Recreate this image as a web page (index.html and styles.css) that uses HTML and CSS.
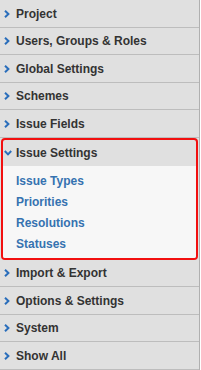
FILE: index.html
```html
<!DOCTYPE html>
<html lang="en">
<head>
    <meta charset="UTF-8">
    <title>Admin Menu</title>
    <link rel="stylesheet" href="styles.css">
</head>
<body>
    <div class="sidebar">
        <ul class="menu">
            <li class="item"><span class="arrow"><svg width="6" height="8" viewBox="0 0 6 8"><path d="M1 0.8 L4.4 4 L1 7.2" fill="none" stroke="#2a6ebb" stroke-width="2"/></svg></span>Project</li>
            <li class="item"><span class="arrow"><svg width="6" height="8" viewBox="0 0 6 8"><path d="M1 0.8 L4.4 4 L1 7.2" fill="none" stroke="#2a6ebb" stroke-width="2"/></svg></span>Users, Groups &amp; Roles</li>
            <li class="item"><span class="arrow"><svg width="6" height="8" viewBox="0 0 6 8"><path d="M1 0.8 L4.4 4 L1 7.2" fill="none" stroke="#2a6ebb" stroke-width="2"/></svg></span>Global Settings</li>
            <li class="item"><span class="arrow"><svg width="6" height="8" viewBox="0 0 6 8"><path d="M1 0.8 L4.4 4 L1 7.2" fill="none" stroke="#2a6ebb" stroke-width="2"/></svg></span>Schemes</li>
            <li class="item"><span class="arrow"><svg width="6" height="8" viewBox="0 0 6 8"><path d="M1 0.8 L4.4 4 L1 7.2" fill="none" stroke="#2a6ebb" stroke-width="2"/></svg></span>Issue Fields</li>
            <li class="open-group">
                <div class="group-head"><span class="arrow"><svg width="8" height="6" viewBox="0 0 8 6"><path d="M0.8 1 L4 4.4 L7.2 1" fill="none" stroke="#2a6ebb" stroke-width="2"/></svg></span>Issue Settings</div>
                <ul class="sub">
                    <li><a href="#">Issue Types</a></li>
                    <li><a href="#">Priorities</a></li>
                    <li><a href="#">Resolutions</a></li>
                    <li><a href="#">Statuses</a></li>
                </ul>
            </li>
            <li class="item"><span class="arrow"><svg width="6" height="8" viewBox="0 0 6 8"><path d="M1 0.8 L4.4 4 L1 7.2" fill="none" stroke="#2a6ebb" stroke-width="2"/></svg></span>Import &amp; Export</li>
            <li class="item"><span class="arrow"><svg width="6" height="8" viewBox="0 0 6 8"><path d="M1 0.8 L4.4 4 L1 7.2" fill="none" stroke="#2a6ebb" stroke-width="2"/></svg></span>Options &amp; Settings</li>
            <li class="item"><span class="arrow"><svg width="6" height="8" viewBox="0 0 6 8"><path d="M1 0.8 L4.4 4 L1 7.2" fill="none" stroke="#2a6ebb" stroke-width="2"/></svg></span>System</li>
            <li class="item"><span class="arrow"><svg width="6" height="8" viewBox="0 0 6 8"><path d="M1 0.8 L4.4 4 L1 7.2" fill="none" stroke="#2a6ebb" stroke-width="2"/></svg></span>Show All</li>
        </ul>
    </div>
</body>
</html>
```

FILE: styles.css
```css
body {
    margin: 0;
    padding: 0;
    background-color: #ffffff;
    font-family: "Liberation Sans", Arial, sans-serif;
    font-size: 12px;
    font-weight: bold;
}
.sidebar {
    width: 199px;
    height: 370px;
    background-color: #e0e0e0;
    border-right: 1px solid #b0b0b0;
}
.menu {
    list-style: none;
    margin: 0;
    padding: 0;
}
.item {
    display: flex;
    align-items: center;
    box-sizing: border-box;
    height: 27.5px;
    padding-top: 1px;
    border-bottom: 1px solid #bdbdbd;
    color: #333333;
}
.arrow {
    display: flex;
    align-items: center;
    justify-content: center;
    width: 8px;
    margin-left: 3px;
    margin-right: 5px;
}
.open-group {
    margin: 0 1px;
    border: 2px solid #f21010;
    border-radius: 4px;
    overflow: hidden;
}
.group-head {
    display: flex;
    align-items: center;
    height: 26px;
    color: #333333;
}
.group-head .arrow {
    margin-left: 1px;
    margin-right: 4px;
}
.sub {
    list-style: none;
    margin: 0;
    padding: 5px 0 3px 0;
    background-color: #f7f7f7;
}
.sub li {
    height: 21px;
    line-height: 21px;
    padding-left: 13px;
}
.sub a {
    color: #3572b0;
    text-decoration: none;
}
```
